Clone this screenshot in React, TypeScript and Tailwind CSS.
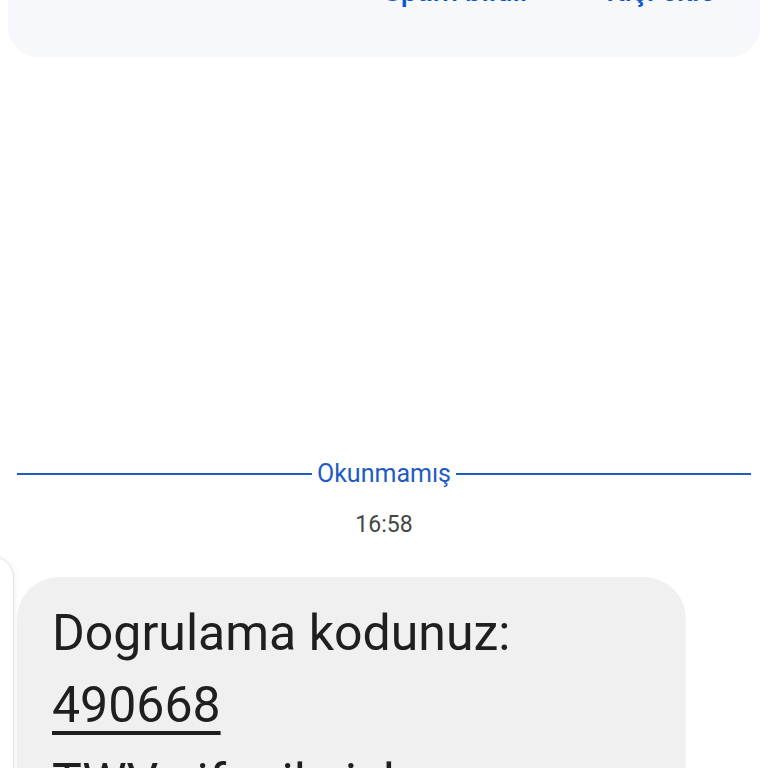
export default function App() {
  return (
    <div
      className="relative w-[768px] h-[768px] overflow-hidden bg-white"
      style={{ fontFamily: "Roboto, 'Noto Sans', sans-serif" }}
    >
      {/* Sender actions card, scrolled up */}
      <div className="mx-2 h-[57px] rounded-b-[30px] bg-[#f6f8fc]">
        <div className="flex -translate-y-[25px] justify-end gap-[76px] pr-[45px] text-[29px] font-medium leading-[32px] text-[#0b57d0]">
          <span>Spam bildir</span>
          <span>Kişi ekle</span>
        </div>
      </div>

      {/* Unread divider */}
      <div className="mt-[403px] flex items-center px-[17px]">
        <div className="h-[2px] flex-1 bg-[#1f5bc4]" />
        <span className="px-[5px] text-[25px] leading-[28px] text-[#1f5bc4]">Okunmamış</span>
        <div className="h-[2px] flex-1 bg-[#1f5bc4]" />
      </div>

      <div className="mt-[23px] text-center text-[23px] leading-[28px] text-[#444746]">16:58</div>

      {/* Left edge card peeking */}
      <div className="absolute left-[-30px] top-[556px] h-[260px] w-[44px] rounded-[22px] border border-[#e4e4e4] bg-white shadow-[0_0_6px_rgba(0,0,0,0.08)]" />

      {/* Message bubble */}
      <div className="ml-[17px] mt-[38px] w-[669px] rounded-[42px] bg-[#f0f0f0] px-[35px] pt-[20px] pb-[20px] text-[50px] leading-[72px] text-[#1f1f1f]">
        <div>Dogrulama kodunuz:</div>
        <div>
          <span className="underline decoration-[4px] underline-offset-[9px]">490668</span>
        </div>
        <div className="mt-[5px]">TWV şifre ile işlem kaydedildi</div>
      </div>
    </div>
  );
}
